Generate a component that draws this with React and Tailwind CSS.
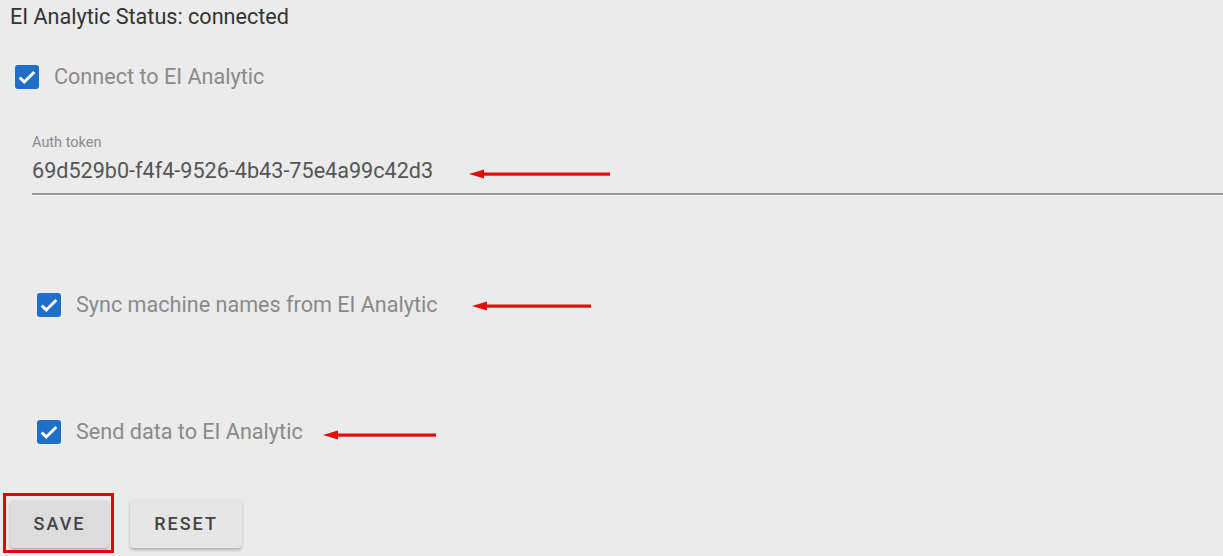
import React from "react";

function Check({ className = "" }) {
  return (
    <span className={"flex h-[24px] w-[24px] items-center justify-center rounded-[3px] bg-[#1f6fc8] shrink-0 " + className}>
      <svg width="22" height="22" viewBox="0 0 24 24" fill="none">
        <path d="M4 12.5l5 5 11-11" stroke="#ffffff" strokeWidth="3.2" strokeLinecap="butt" strokeLinejoin="miter" />
      </svg>
    </span>
  );
}

function Arrow({ width }) {
  return (
    <svg width={width} height="12" viewBox={`0 0 ${width} 12`} className="shrink-0">
      <rect x="12" y="4.5" width={width - 12} height="3.2" fill="#e10d0d" />
      <polygon points="0,6 15,1.5 15,10.5" fill="#e10d0d" />
    </svg>
  );
}

export default function App() {
  return (
    <div
      className="relative h-[556px] w-[1223px] overflow-hidden bg-[#ebebeb] pl-[10px]"
      style={{ fontFamily: "Roboto, 'Liberation Sans', sans-serif" }}
    >
      <div className="mt-[5px] h-[24px] text-[21.6px] leading-[24px] text-[#333333]">
        EI Analytic Status: connected
      </div>

      <div className="mt-[36px] ml-[5px] flex h-[24px] items-center gap-[15px]">
        <Check />
        <span className="text-[21.6px] leading-[24px] text-[#8a8a8a]">Connect to EI Analytic</span>
      </div>

      <div className="ml-[22px] mt-[46px] border-b-2 border-[#9a9a9a] pb-[10px] shadow-[0_1px_0_#f6f6f6]">
        <div className="h-[16px] text-[14.5px] leading-[16px] text-[#8a8a8a]">Auth token</div>
        <div className="mt-[8px] flex h-[24px] items-center">
          <span className="text-[21.6px] leading-[24px] text-[#555555]">69d529b0-f4f4-9526-4b43-75e4a99c42d3</span>
          <span className="ml-[36px] flex items-center pt-[5px]">
            <Arrow width={141} />
          </span>
        </div>
      </div>

      <div className="ml-[27px] mt-[98px] flex h-[24px] items-center gap-[15px]">
        <Check />
        <span className="text-[21.6px] leading-[24px] text-[#8a8a8a]">Sync machine names from EI Analytic</span>
        <span className="ml-[19px] flex items-center pt-[2px]">
          <Arrow width={119} />
        </span>
      </div>

      <div className="ml-[27px] mt-[103px] flex h-[24px] items-center gap-[15px]">
        <Check />
        <span className="text-[21.6px] leading-[24px] text-[#8a8a8a]">Send data to EI Analytic</span>
        <span className="ml-[5px] flex items-center pt-[6px]">
          <Arrow width={113} />
        </span>
      </div>

      <div className="mt-[55px] flex items-center gap-[21px]">
        <div className="relative">
          <button className="h-[48px] w-[99px] rounded-[4px] bg-[#dcdcdc] text-[18px] font-medium tracking-[2px] text-[#444444] shadow-[0_2px_3px_rgba(0,0,0,0.25)]">
            SAVE
          </button>
          <div className="pointer-events-none absolute left-[-7px] top-[-7px] h-[60px] w-[111px] border-[3px] border-[#e0000f]" />
        </div>
        <button className="h-[49px] w-[112px] rounded-[4px] bg-[#e6e6e6] text-[18px] font-medium tracking-[2px] text-[#444444] shadow-[0_2px_3px_rgba(0,0,0,0.25)]">
          RESET
        </button>
      </div>
    </div>
  );
}
